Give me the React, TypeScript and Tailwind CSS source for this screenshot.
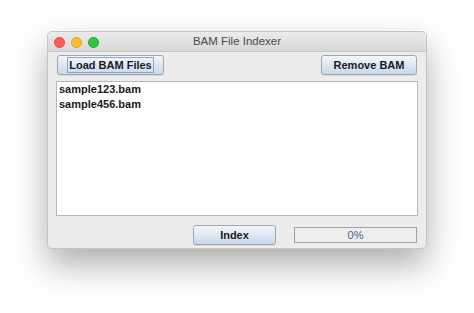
import React from "react";

const files = ["sample123.bam", "sample456.bam"];

const btn =
  "h-[20px] rounded-[3px] border border-[#9fa6ae] bg-gradient-to-b from-[#f4f7fb] to-[#c8d8eb] text-[11px] font-bold text-[#1a1a1a] whitespace-nowrap flex items-center justify-center shadow-[0_1px_0_rgba(0,0,0,0.08)]";

export default function App() {
  return (
    <div
      className="w-[474px] h-[313px] bg-white overflow-hidden"
      style={{ fontFamily: '"Liberation Sans", Arial, sans-serif' }}
    >
      <div className="ml-[47px] mt-[31px] w-[380px] h-[218px] rounded-[5px] border border-[#c4c4c4] bg-[#ececec] shadow-[0_16px_34px_rgba(0,0,0,0.32)] flex flex-col overflow-hidden">
        {/* title bar */}
        <div className="relative h-[20px] bg-gradient-to-b from-[#ebebeb] to-[#d8d8d8] border-b border-[#c8c8c8] flex items-center justify-center">
          <div className="absolute left-[6px] top-[5px] flex gap-[6px]">
            <span className="w-[11px] h-[11px] rounded-full bg-[#fc5f57] border border-[#e0443e]" />
            <span className="w-[11px] h-[11px] rounded-full bg-[#fdbc2e] border border-[#dea123]" />
            <span className="w-[11px] h-[11px] rounded-full bg-[#29c840] border border-[#1aab29]" />
          </div>
          <span className="text-[11.5px] text-[#4a4a4a]">BAM File Indexer</span>
        </div>

        {/* body */}
        <div className="flex flex-col flex-1 px-[8px] pt-[3px] pb-[3px]">
          <div className="flex justify-between pl-[1px] pr-[1px]">
            <button className={`${btn} w-[107px]`}>
              <span className="border border-[#8fa7c4] px-[1px] leading-[14px]">Load BAM Files</span>
            </button>
            <button className={`${btn} w-[96px]`}>Remove BAM</button>
          </div>

          <div className="mt-[6px] h-[135px] bg-white border border-[#b9b9b9] px-[2px] flex flex-col">
            {files.map((f) => (
              <div key={f} className="text-[11px] font-bold text-[#1a1a1a] leading-[15px]">
                {f}
              </div>
            ))}
          </div>

          <div className="mt-[9px] flex items-center pl-[137px] gap-[18px]">
            <button className={`${btn} w-[83px]`}>Index</button>
            <div className="w-[123px] h-[16px] border border-[#a2a2a2] bg-[#ededed] flex items-center justify-center text-[11px] text-[#4a6290]">
              0%
            </div>
          </div>
        </div>
      </div>
    </div>
  );
}
